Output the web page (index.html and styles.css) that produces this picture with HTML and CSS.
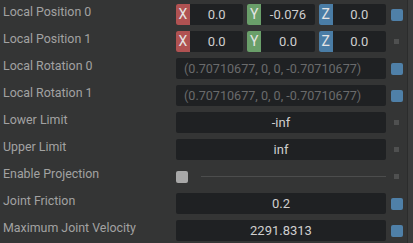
FILE: index.html
```html
<!DOCTYPE html>
<html lang="en">
    <head>
        <meta charset="UTF-8" />
        <title>Joint Properties</title>
        <link rel="stylesheet" href="styles.css">
    </head>

    <body>
        <div class="panel">
            <div class="props">
                <div class="row">
                    <div class="label">Local Position 0</div>
                    <div class="vec">
                        <div class="comp"><span class="axis x">X</span><span class="num">0.0</span></div>
                        <div class="comp"><span class="axis y">Y</span><span class="num">-0.076</span></div>
                        <div class="comp"><span class="axis z">Z</span><span class="num">0.0</span></div>
                    </div>
                    <div class="mark"><span class="set"></span></div>
                </div>
                <div class="row">
                    <div class="label">Local Position 1</div>
                    <div class="vec">
                        <div class="comp"><span class="axis x">X</span><span class="num">0.0</span></div>
                        <div class="comp"><span class="axis y">Y</span><span class="num">0.0</span></div>
                        <div class="comp"><span class="axis z">Z</span><span class="num">0.0</span></div>
                    </div>
                    <div class="mark"><span class="unset"></span></div>
                </div>
                <div class="row">
                    <div class="label">Local Rotation 0</div>
                    <div class="field quat">(0.70710677, 0, 0, -0.70710677)</div>
                    <div class="mark"><span class="set"></span></div>
                </div>
                <div class="row">
                    <div class="label">Local Rotation 1</div>
                    <div class="field quat">(0.70710677, 0, 0, -0.70710677)</div>
                    <div class="mark"><span class="set"></span></div>
                </div>
                <div class="row">
                    <div class="label">Lower Limit</div>
                    <div class="field">-inf</div>
                    <div class="mark"><span class="unset"></span></div>
                </div>
                <div class="row">
                    <div class="label">Upper Limit</div>
                    <div class="field">inf</div>
                    <div class="mark"><span class="unset"></span></div>
                </div>
                <div class="row">
                    <div class="label">Enable Projection</div>
                    <div class="check-line">
                        <span class="check"></span>
                        <span class="line"></span>
                    </div>
                    <div class="mark"><span class="unset"></span></div>
                </div>
                <div class="row">
                    <div class="label">Joint Friction</div>
                    <div class="field">0.2</div>
                    <div class="mark"><span class="set"></span></div>
                </div>
                <div class="row">
                    <div class="label">Maximum Joint Velocity</div>
                    <div class="field">2291.8313</div>
                    <div class="mark"><span class="set"></span></div>
                </div>
            </div>
            <div class="scrollbar"></div>
        </div>
    </body>
</html>
```

FILE: styles.css
```css
* {
    padding: 0;
    margin: 0;
    box-sizing: border-box;
}

body {
    background-color: #343535;
    font-family: Roboto, "Liberation Sans", sans-serif;
    font-size: 13px;
}

.panel {
    display: flex;
    height: 243px;
}

.props {
    flex: 1;
    display: flex;
    flex-direction: column;
    gap: 6px;
    padding-top: 4px;
}

.row {
    display: flex;
    height: 21px;
}

.label {
    width: 176px;
    padding-left: 3px;
    font-size: 12.4px;
    line-height: 15px;
    color: #a2a2a2;
}

.vec {
    width: 210px;
    display: grid;
    grid-template-columns: repeat(3, 1fr);
    gap: 4px;
}

.comp {
    display: flex;
    background-color: #1f2123;
    border-radius: 2px;
}

.axis {
    width: 14px;
    border-radius: 2px 0 0 2px;
    color: #e4e4e4;
    font-size: 14px;
    line-height: 21px;
    text-align: center;
}

.axis.x {
    background-color: #b05252;
}

.axis.y {
    background-color: #6a9f6a;
}

.axis.z {
    background-color: #4a7da6;
}

.num {
    flex: 1;
    color: #cfcfcf;
    line-height: 21px;
    text-align: center;
}

.field {
    width: 210px;
    background-color: #1f2123;
    border-radius: 2px;
    color: #cfcfcf;
    line-height: 21px;
    text-align: center;
}

.field.quat {
    padding-left: 8px;
    font-size: 12.6px;
    color: #6a6b6c;
    text-align: left;
}

.check-line {
    width: 210px;
    display: flex;
    align-items: center;
    gap: 13px;
}

.check {
    width: 12px;
    height: 12px;
    border-radius: 2px;
    background-color: #a8a8a8;
}

.line {
    flex: 1;
    height: 1px;
    background-color: #4c4d4d;
}

.mark {
    width: 21px;
    display: flex;
    align-items: center;
    justify-content: center;
}

.mark .set {
    width: 12px;
    height: 12px;
    border-radius: 2px;
    background-color: #4f80a8;
}

.mark .unset {
    width: 5px;
    height: 5px;
    background-color: #4f5050;
}

.scrollbar {
    width: 6px;
    border-left: 1px solid #2b2c2c;
    background-color: #3b3c3c;
}
```
